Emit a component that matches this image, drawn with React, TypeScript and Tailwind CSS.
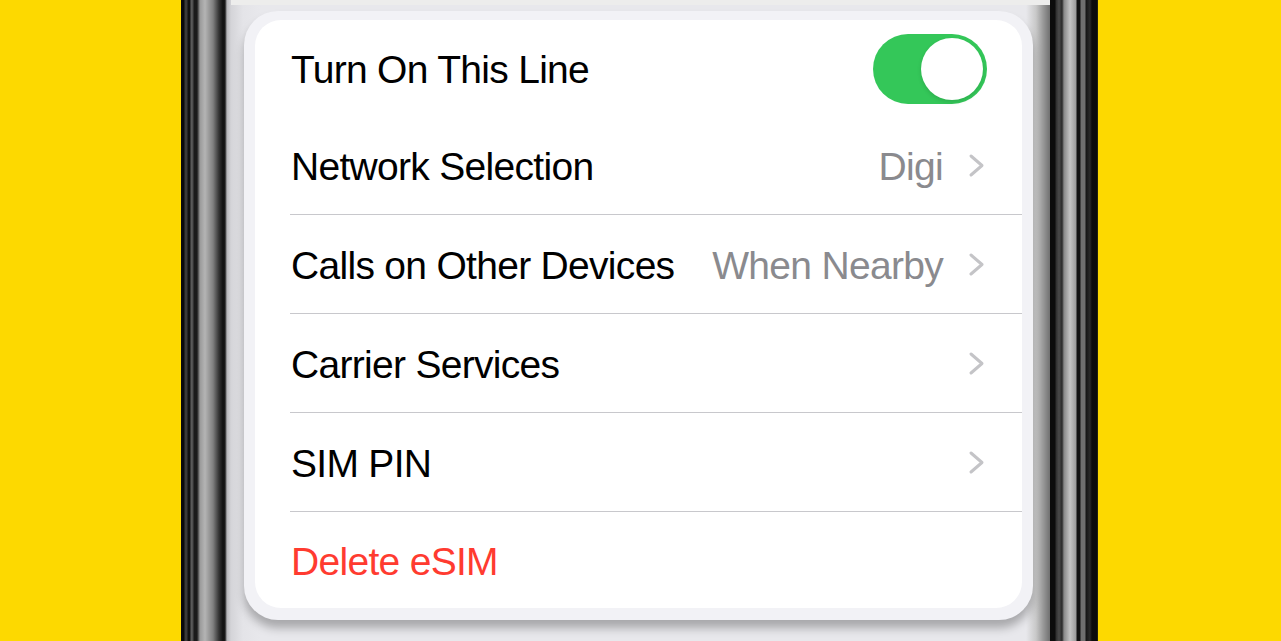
import React from "react";

const Chevron = () => (
  <svg width="17" height="25" viewBox="0 0 17 25" fill="none" className="shrink-0">
    <polyline
      points="3,3 14,12.5 3,22"
      stroke="#c4c4c7"
      strokeWidth="3"
      strokeLinecap="round"
      strokeLinejoin="round"
    />
  </svg>
);

const Sep = () => <div className="ml-[35px] h-px bg-[#c8c8cc]" />;

function Row({
  label,
  value,
  chevron,
  red,
  h,
  children,
}: {
  label: string;
  value?: string;
  chevron?: boolean;
  red?: boolean;
  h: string;
  children?: React.ReactNode;
}) {
  return (
    <div className={`flex items-center pl-[36px] pr-[37px] ${h}`}>
      <span className={`flex-1 whitespace-nowrap pt-[4px] ${red ? "text-[#ff3b30]" : "text-black"}`}>{label}</span>
      {value && <span className="mr-[25px] whitespace-nowrap pt-[4px] text-[#8a8a8e]">{value}</span>}
      {chevron && <Chevron />}
      {children}
    </div>
  );
}

export default function App() {
  return (
    <div className="flex h-[641px] w-[1281px] overflow-hidden bg-[#fdd900] pl-[181px]">
      {/* left bezel */}
      <div className="h-full w-[50px] shrink-0 bg-[linear-gradient(to_right,#0a0a0a_0px,#0a0a0a_3px,#3a3a3a_4px,#3a3a3a_6px,#111_7px,#111_9px,#5e5e5e_10px,#4a4a4a_12px,#1a1a1a_13px,#1a1a1a_16px,#9a9a9a_19px,#b4b4b4_24px,#808080_32px,#333_38px,#111_42px,#1a1a1a_44px,#b8b8bc_46px,#d4d4d8_50px)]" />
      {/* screen */}
      <div className="relative h-full w-[819px] shrink-0 bg-[linear-gradient(to_right,#d4d4d8_0px,#e4e4e8_12px,#e8e8ec_30px,#e8e8ec_795px,#c8c8c8_805px,#9a9a9a_812px,#707070_819px)]">
        <div className="h-[5px] bg-[#ededec]" />
        <div className="ml-[13px] mt-[6px] h-[609px] w-[789px] rounded-[34px] bg-[#f2f2f6] px-[11px] pb-[12px] pt-[9px] shadow-[0_8px_10px_rgba(0,0,0,0.28)]">
          <div className="h-full w-full overflow-hidden rounded-[26px] bg-white font-['Liberation_Sans',Arial,sans-serif] text-[39px] tracking-[-0.7px]">
            <Row label="Turn On This Line" h="h-[97px]">
              <div className="-mr-[2px] flex h-[70px] w-[114px] shrink-0 items-center justify-end rounded-full bg-[#34c759] pr-[4px]">
                <div className="h-[62px] w-[62px] rounded-full bg-white shadow-[0_2px_4px_rgba(0,0,0,0.12)]" />
              </div>
            </Row>
            <Row label="Network Selection" value="Digi" chevron h="h-[97px]" />
            <Sep />
            <Row label="Calls on Other Devices" value="When Nearby" chevron h="h-[98px]" />
            <Sep />
            <Row label="Carrier Services" chevron h="h-[98px]" />
            <Sep />
            <Row label="SIM PIN" chevron h="h-[98px]" />
            <Sep />
            <Row label="Delete eSIM" red h="h-[96px]" />
          </div>
        </div>
      </div>
      {/* right bezel */}
      <div className="h-full w-[48px] shrink-0 bg-[linear-gradient(to_right,#0c0c0c_0px,#0c0c0c_5px,#2e2e2e_6px,#4a4a4a_9px,#2a2a2a_12px,#8a8a8a_14px,#c4c4c4_20px,#9a9a9a_26px,#111_27px,#111_30px,#6e6e6e_31px,#6e6e6e_35px,#141414_36px,#2a2a2a_40px,#0c0c0c_42px,#0c0c0c_47px,#3a3a10_48px)]" />
    </div>
  );
}
